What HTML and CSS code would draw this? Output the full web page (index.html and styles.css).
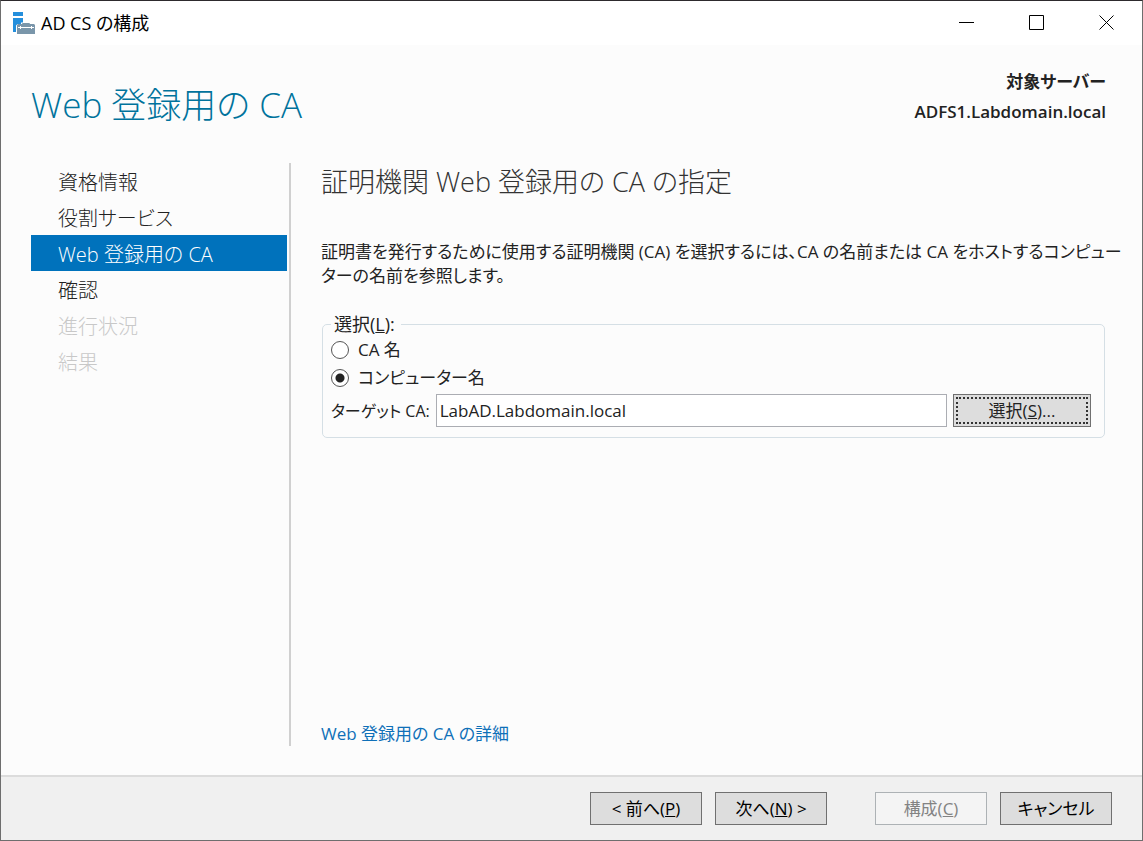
FILE: index.html
```html
<!DOCTYPE html>
<html lang="ja">
<head>
  <meta charset="UTF-8" />
  <meta name="viewport" content="width=device-width, initial-scale=1.0" />
  <title>AD CS の構成</title>
  <link rel="stylesheet" href="styles.css">
</head>
<body>
  <div class="window">
    <div class="titlebar">
      <svg class="app-icon" width="22" height="22" viewBox="0 0 22 22" aria-hidden="true">
        <path fill="#258fdc" d="M0 0h10v4H0zM0 6h10v4.500H8V12H4.500L3 13.500V20H0z" />
        <path fill="#7a96aa" d="M5 12h16l1 1v9H4v-9z" />
        <path fill="none" stroke="#7a96aa" d="M9.500 12v-.5h7v.5" />
        <path fill="none" stroke="#fff" d="M5 15.500h16M7.500 14v3M18.500 14v3" />
      </svg>
      <span class="titlebar-text">AD CS の構成</span>
      <div class="window-buttons">
        <button type="button" aria-label="最小化">
          <svg width="16" height="16" viewBox="0 0 16 16"><path d="M0 7.500h15" /></svg>
        </button>
        <button type="button" aria-label="最大化">
          <svg width="16" height="16" viewBox="0 0 16 16"><path d="M.5.5h14v14H.5z" /></svg>
        </button>
        <button type="button" aria-label="閉じる">
          <svg width="16" height="16" viewBox="0 0 16 16"><path d="M.5.500l14 14M14.500.500l-14 14" /></svg>
        </button>
      </div>
    </div>

    <header class="header">
      <h1>Web 登録用の CA</h1>
      <div class="server">
        <div>対象サーバー</div>
        <div>ADFS1.Labdomain.local</div>
      </div>
    </header>

    <div class="wizard">
      <nav class="steps">
        <a href="#credentials">資格情報</a>
        <a href="#roles">役割サービス</a>
        <a href="#web-ca" class="active" aria-current="step">Web 登録用の CA</a>
        <a href="#confirm">確認</a>
        <a href="#progress" class="disabled" aria-disabled="true">進行状況</a>
        <a href="#results" class="disabled" aria-disabled="true">結果</a>
      </nav>

      <main class="content">
        <h2>証明機関 Web 登録用の CA の指定</h2>
        <p>証明書を発行するために使用する証明機関 (CA) を選択するには、CA の名前または CA をホストするコンピューターの名前を参照します。</p>

        <form id="caForm">
          <fieldset>
            <legend>選択(<u>L</u>):</legend>
            <label class="radio"><input type="radio" name="ca" value="ca" /> CA 名</label>
            <label class="radio"><input type="radio" name="ca" value="computer" checked /> コンピューター名</label>
            <div class="target">
              <label for="target">ターゲット CA:</label>
              <input type="text" id="target" value="LabAD.Labdomain.local" />
              <button type="button" class="button select-button">選択(<u>S</u>)...</button>
            </div>
          </fieldset>
        </form>

        <a href="#details" class="details">Web 登録用の CA の詳細</a>
      </main>
    </div>

    <footer class="footer">
      <button type="button" class="button">&lt; 前へ(<u>P</u>)</button>
      <button type="button" class="button next">次へ(<u>N</u>) &gt;</button>
      <button type="button" class="button" disabled>構成(<u>C</u>)</button>
      <button type="button" class="button">キャンセル</button>
    </footer>
  </div>
</body>
</html>
```
FILE: styles.css
```css
* {
  box-sizing: border-box;
}

body {
  margin: 0;
  font-family: "Open Sans", "Noto Sans CJK JP", sans-serif;
  font-feature-settings: "palt";
  font-size: 17px;
  line-height: 24px;
  color: #222;
}

button, input {
  font: inherit;
  font-feature-settings: inherit;
  color: inherit;
}

.window {
  display: flex;
  flex-direction: column;
  min-height: 100vh;
  background-color: #fcfcfc;
  border: 1px solid #6e6e6e;
  border-top-color: #2d2a2d;
}

/* title bar */
.titlebar {
  display: flex;
  align-items: center;
  height: 44px;
  padding-left: 12px;
  background-color: #fff;
  font-size: 18px;
  color: #000;
}

.titlebar-text {
  margin-left: 6px;
}

.window-buttons {
  display: flex;
  align-self: stretch;
  margin-left: auto;
}

.window-buttons button {
  display: flex;
  align-items: center;
  justify-content: center;
  width: 70px;
  padding: 0;
  border: none;
  background: none;
}

.window-buttons path {
  fill: none;
  stroke: #000;
}

/* header */
.header {
  display: flex;
  justify-content: space-between;
  align-items: flex-end;
  padding: 22px 36px 0 30px;
}

h1 {
  margin: 0;
  font-size: 35px;
  font-weight: 300;
  line-height: 44px;
  color: #00739c;
}

.server {
  font-weight: 600;
  line-height: 30px;
  text-align: right;
}

/* body */
.wizard {
  flex: 1;
  display: flex;
  padding: 36px 36px 29px 30px;
}

.steps {
  flex: none;
  width: 260px;
  padding-right: 2px;
  border-right: 2px solid #d0d0d0;
}

.steps a {
  display: block;
  padding: 4px 0 0 27px;
  font-size: 20px;
  font-weight: 300;
  line-height: 32px;
  color: #222;
  text-decoration: none;
}

.steps .active {
  background-color: #0072bc;
  color: #fff;
}

.steps .disabled {
  color: #c8c8c8;
}

.content {
  flex: 1;
  display: flex;
  flex-direction: column;
  padding-left: 30px;
}

h2 {
  margin: 0 0 39px;
  font-size: 27px;
  font-weight: 300;
  line-height: 38px;
  color: #333;
}

p {
  margin: 0 -20px 24px 0;
}

fieldset {
  margin: 0 1px;
  padding: 0 13px 10px 8px;
  border: 1px solid #d5dfe5;
  border-radius: 5px;
}

legend {
  padding: 0 6px 0 3px;
  font-size: 18px;
}

.radio {
  display: flex;
  align-items: center;
  gap: 9px;
  height: 28px;
}

.radio input {
  appearance: none;
  width: 18px;
  height: 18px;
  margin: 0;
  border: 1px solid #555;
  border-radius: 50%;
  background-color: #fff;
}

.radio input:checked {
  background-image: radial-gradient(circle, #222 4px, transparent 5px);
}

.target {
  display: flex;
  align-items: center;
  gap: 6px;
  margin-top: 2px;
}

.target label {
  font-size: 16px;
}

.target input {
  flex: 1;
  min-width: 0;
  height: 33px;
  padding: 0 3px;
  border: 1px solid #abadb3;
  background-color: #fff;
}

.details {
  align-self: flex-start;
  margin-top: auto;
  color: #0f70b8;
  text-decoration: none;
}

/* buttons */
.button {
  width: 112px;
  height: 33px;
  padding: 0;
  border: 1px solid #707070;
  background-color: #ddd;
}

.button:disabled {
  border-color: #adb2b5;
  background-color: #f4f4f4;
  color: #838383;
}

.select-button {
  width: 138px;
  outline: 2px dotted #333;
  outline-offset: -5px;
}

.footer {
  display: flex;
  justify-content: flex-end;
  gap: 13px;
  padding: 15px 30px;
  border-top: 2px solid #dcdcdc;
  background-color: #f0f0f0;
  color: #000;
}

.next {
  margin-right: 35px;
}
```
